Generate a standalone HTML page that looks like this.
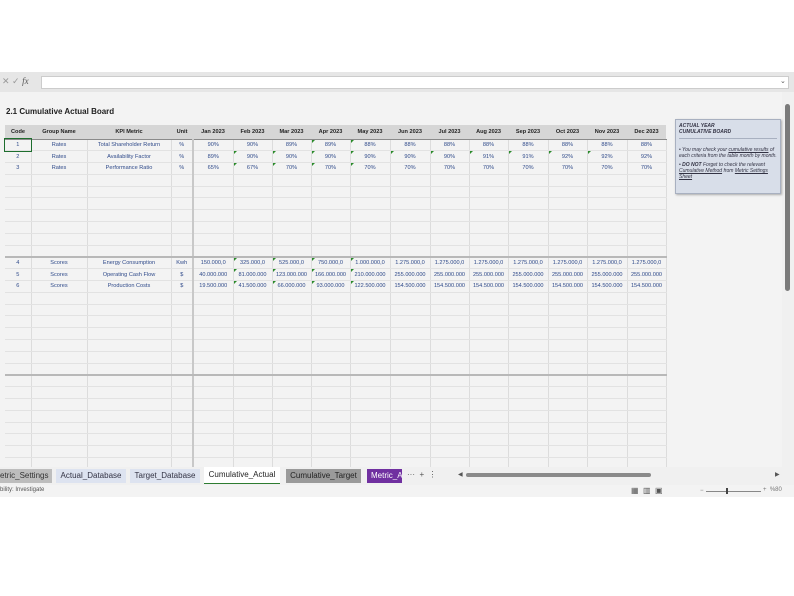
<!DOCTYPE html>
<html><head><meta charset="utf-8"><style>
*{margin:0;padding:0;box-sizing:border-box}
body{width:794px;height:596px;background:#fff;position:relative;overflow:hidden;font-family:"Liberation Sans",sans-serif}
.abs{position:absolute}
table{border-collapse:collapse;table-layout:fixed;position:absolute;left:5px;top:125px;font-size:5.6px;color:#2f4a8a}
td{height:11.8px;border-right:1px solid #dcdcdc;border-bottom:1px solid #e2e2e2;text-align:center;white-space:nowrap;overflow:hidden;position:relative;padding:0}
tr.h td{height:14px;background:#d6d6d6;color:#222;border-bottom:1px solid #8a8a8a;border-right:none;font-weight:bold;font-size:5.6px}
tr.t td{border-bottom:2px solid #b8b8b8}
td.u{border-right:2px solid #c8c8c8}
.g:before{content:"";position:absolute;left:0;top:0;border-top:3px solid #2a8a2a;border-right:3px solid transparent}
</style></head><body>
<div class="abs" style="left:0;top:72px;width:794px;height:20px;background:#e6e6e6"></div>
<div class="abs" style="left:41px;top:76px;width:748px;height:13px;background:#fff;border:1px solid #ccc"></div>
<div class="abs" style="left:2px;top:76px;font-size:9px;color:#999">✕ ✓ <i style="color:#555;font-family:'Liberation Serif'">fx</i></div>
<div class="abs" style="left:780px;top:77px;font-size:7px;color:#555">⌄</div>
<div class="abs" style="left:0;top:92px;width:782px;height:375px;background:#f3f3f3"></div>
<div class="abs" style="left:782px;top:92px;width:12px;height:375px;background:#f0f0f0"></div>
<div class="abs" style="left:785px;top:104px;width:5px;height:187px;background:#7a7a7a;border-radius:3px"></div>
<div class="abs" style="left:6px;top:107px;font-size:8px;font-weight:bold;color:#222">2.1 Cumulative Actual Board</div>
<table>
<colgroup><col style="width:26px"><col style="width:56px"><col style="width:84px"><col style="width:22px"><col style="width:40px"><col style="width:39px"><col style="width:39px"><col style="width:39px"><col style="width:40px"><col style="width:40px"><col style="width:39px"><col style="width:39px"><col style="width:40px"><col style="width:39px"><col style="width:40px"><col style="width:39px"></colgroup>
<tr class="h"><td>Code</td><td>Group Name</td><td>KPI Metric</td><td>Unit</td><td>Jan 2023</td><td>Feb 2023</td><td>Mar 2023</td><td>Apr 2023</td><td>May 2023</td><td>Jun 2023</td><td>Jul 2023</td><td>Aug 2023</td><td>Sep 2023</td><td>Oct 2023</td><td>Nov 2023</td><td>Dec 2023</td></tr>
<tr><td style="outline:1px solid #1e6e2e">1</td><td>Rates</td><td>Total Shareholder Return</td><td class="u">%</td><td>90%</td><td>90%</td><td>89%</td><td class="g">89%</td><td class="g">88%</td><td>88%</td><td>88%</td><td>88%</td><td>88%</td><td>88%</td><td>88%</td><td>88%</td></tr>
<tr><td>2</td><td>Rates</td><td>Availability Factor</td><td class="u">%</td><td>89%</td><td class="g">90%</td><td class="g">90%</td><td class="g">90%</td><td class="g">90%</td><td class="g">90%</td><td class="g">90%</td><td class="g">91%</td><td class="g">91%</td><td class="g">92%</td><td class="g">92%</td><td>92%</td></tr>
<tr><td>3</td><td>Rates</td><td>Performance Ratio</td><td class="u">%</td><td>65%</td><td class="g">67%</td><td class="g">70%</td><td class="g">70%</td><td class="g">70%</td><td>70%</td><td>70%</td><td>70%</td><td>70%</td><td>70%</td><td>70%</td><td>70%</td></tr>
<tr><td></td><td></td><td></td><td class="u"></td><td></td><td></td><td></td><td></td><td></td><td></td><td></td><td></td><td></td><td></td><td></td><td></td></tr>
<tr><td></td><td></td><td></td><td class="u"></td><td></td><td></td><td></td><td></td><td></td><td></td><td></td><td></td><td></td><td></td><td></td><td></td></tr>
<tr><td></td><td></td><td></td><td class="u"></td><td></td><td></td><td></td><td></td><td></td><td></td><td></td><td></td><td></td><td></td><td></td><td></td></tr>
<tr><td></td><td></td><td></td><td class="u"></td><td></td><td></td><td></td><td></td><td></td><td></td><td></td><td></td><td></td><td></td><td></td><td></td></tr>
<tr><td></td><td></td><td></td><td class="u"></td><td></td><td></td><td></td><td></td><td></td><td></td><td></td><td></td><td></td><td></td><td></td><td></td></tr>
<tr><td></td><td></td><td></td><td class="u"></td><td></td><td></td><td></td><td></td><td></td><td></td><td></td><td></td><td></td><td></td><td></td><td></td></tr>
<tr class="t"><td></td><td></td><td></td><td class="u"></td><td></td><td></td><td></td><td></td><td></td><td></td><td></td><td></td><td></td><td></td><td></td><td></td></tr>
<tr><td>4</td><td>Scores</td><td>Energy Consumption</td><td class="u">Kwh</td><td>150.000,0</td><td class="g">325.000,0</td><td class="g">525.000,0</td><td class="g">750.000,0</td><td class="g">1.000.000,0</td><td>1.275.000,0</td><td>1.275.000,0</td><td>1.275.000,0</td><td>1.275.000,0</td><td>1.275.000,0</td><td>1.275.000,0</td><td>1.275.000,0</td></tr>
<tr><td>5</td><td>Scores</td><td>Operating Cash Flow</td><td class="u">$</td><td>40.000.000</td><td class="g">81.000.000</td><td class="g">123.000.000</td><td class="g">166.000.000</td><td class="g">210.000.000</td><td>255.000.000</td><td>255.000.000</td><td>255.000.000</td><td>255.000.000</td><td>255.000.000</td><td>255.000.000</td><td>255.000.000</td></tr>
<tr><td>6</td><td>Scores</td><td>Production Costs</td><td class="u">$</td><td>19.500.000</td><td class="g">41.500.000</td><td class="g">66.000.000</td><td class="g">93.000.000</td><td class="g">122.500.000</td><td>154.500.000</td><td>154.500.000</td><td>154.500.000</td><td>154.500.000</td><td>154.500.000</td><td>154.500.000</td><td>154.500.000</td></tr>
<tr><td></td><td></td><td></td><td class="u"></td><td></td><td></td><td></td><td></td><td></td><td></td><td></td><td></td><td></td><td></td><td></td><td></td></tr>
<tr><td></td><td></td><td></td><td class="u"></td><td></td><td></td><td></td><td></td><td></td><td></td><td></td><td></td><td></td><td></td><td></td><td></td></tr>
<tr><td></td><td></td><td></td><td class="u"></td><td></td><td></td><td></td><td></td><td></td><td></td><td></td><td></td><td></td><td></td><td></td><td></td></tr>
<tr><td></td><td></td><td></td><td class="u"></td><td></td><td></td><td></td><td></td><td></td><td></td><td></td><td></td><td></td><td></td><td></td><td></td></tr>
<tr><td></td><td></td><td></td><td class="u"></td><td></td><td></td><td></td><td></td><td></td><td></td><td></td><td></td><td></td><td></td><td></td><td></td></tr>
<tr><td></td><td></td><td></td><td class="u"></td><td></td><td></td><td></td><td></td><td></td><td></td><td></td><td></td><td></td><td></td><td></td><td></td></tr>
<tr class="t"><td></td><td></td><td></td><td class="u"></td><td></td><td></td><td></td><td></td><td></td><td></td><td></td><td></td><td></td><td></td><td></td><td></td></tr>
<tr><td></td><td></td><td></td><td class="u"></td><td></td><td></td><td></td><td></td><td></td><td></td><td></td><td></td><td></td><td></td><td></td><td></td></tr>
<tr><td></td><td></td><td></td><td class="u"></td><td></td><td></td><td></td><td></td><td></td><td></td><td></td><td></td><td></td><td></td><td></td><td></td></tr>
<tr><td></td><td></td><td></td><td class="u"></td><td></td><td></td><td></td><td></td><td></td><td></td><td></td><td></td><td></td><td></td><td></td><td></td></tr>
<tr><td></td><td></td><td></td><td class="u"></td><td></td><td></td><td></td><td></td><td></td><td></td><td></td><td></td><td></td><td></td><td></td><td></td></tr>
<tr><td></td><td></td><td></td><td class="u"></td><td></td><td></td><td></td><td></td><td></td><td></td><td></td><td></td><td></td><td></td><td></td><td></td></tr>
<tr><td></td><td></td><td></td><td class="u"></td><td></td><td></td><td></td><td></td><td></td><td></td><td></td><td></td><td></td><td></td><td></td><td></td></tr>
<tr><td></td><td></td><td></td><td class="u"></td><td></td><td></td><td></td><td></td><td></td><td></td><td></td><td></td><td></td><td></td><td></td><td></td></tr>
<tr><td></td><td></td><td></td><td class="u"></td><td></td><td></td><td></td><td></td><td></td><td></td><td></td><td></td><td></td><td></td><td></td><td></td></tr>
</table>
<div class="abs" style="left:675px;top:119px;width:106px;height:75px;background:#d8dee9;border:1px solid #a8b0c0;box-shadow:1px 1px 2px #aaa;font-size:5px;color:#334;font-style:italic;padding:3px">
<div style="font-weight:bold;line-height:6px;border-bottom:1px solid #a8b0c0;padding-bottom:3px">ACTUAL YEAR<br>CUMULATIVE BOARD</div>
<div style="margin-top:8px;line-height:6px">• You may check your <u>cumulative results</u> of each criteria from the table month by month.</div>
<div style="margin-top:3px;line-height:6px">• <b>DO NOT</b> Forget to check the relevant <u>Cumulative Method</u> from <u>Metric Settings Sheet</u></div>
</div>
<div class="abs" style="left:0;top:467px;width:794px;height:18px;background:#f0f0f0;font-size:8px;color:#333"></div>
<div class="abs" style="left:0;top:469px;width:52px;height:14px;background:#bdbdbd;font-size:8px;color:#333;line-height:14px;text-align:right;padding-right:4px">etric_Settings</div>
<div class="abs" style="left:56px;top:469px;width:70px;height:14px;background:#dde3f0;font-size:8px;color:#334;line-height:14px;text-align:center">Actual_Database</div>
<div class="abs" style="left:130px;top:469px;width:70px;height:14px;background:#dde3f0;font-size:8px;color:#334;line-height:14px;text-align:center">Target_Database</div>
<div class="abs" style="left:204px;top:467px;width:76px;height:17px;background:#fff;font-size:8px;color:#222;line-height:15px;text-align:center;border-bottom:1px solid #2e7d32">Cumulative_Actual</div>
<div class="abs" style="left:286px;top:469px;width:75px;height:14px;background:#9a9a9a;font-size:8px;color:#222;line-height:14px;text-align:center">Cumulative_Target</div>
<div class="abs" style="left:367px;top:469px;width:35px;height:14px;background:#7030a0;font-size:8px;color:#fff;line-height:14px;padding-left:4px;overflow:hidden;white-space:nowrap">Metric_A</div>
<div class="abs" style="left:407px;top:470px;font-size:8px;color:#555">··· &nbsp;+ &nbsp;⋮</div>
<div class="abs" style="left:458px;top:471px;font-size:6px;color:#555">◀</div>
<div class="abs" style="left:466px;top:473px;width:185px;height:4px;background:#8a8a8a;border-radius:2px"></div>
<div class="abs" style="left:775px;top:471px;font-size:6px;color:#555">▶</div>
<div class="abs" style="left:0;top:485px;width:794px;height:12px;background:#f3f3f3"></div>
<div class="abs" style="left:0;top:487px;font-size:6px;color:#555">bility: Investigate</div>
<div class="abs" style="left:631px;top:486px;font-size:8px;color:#555">▦ &nbsp;▥ &nbsp;▣</div>
<div class="abs" style="left:700px;top:488px;font-size:6px;color:#777">−</div>
<div class="abs" style="left:706px;top:491px;width:55px;height:1px;background:#888"></div>
<div class="abs" style="left:726px;top:488px;width:2px;height:6px;background:#444"></div>
<div class="abs" style="left:763px;top:487px;font-size:6px;color:#777">+ &nbsp;%80</div>
</body></html>
